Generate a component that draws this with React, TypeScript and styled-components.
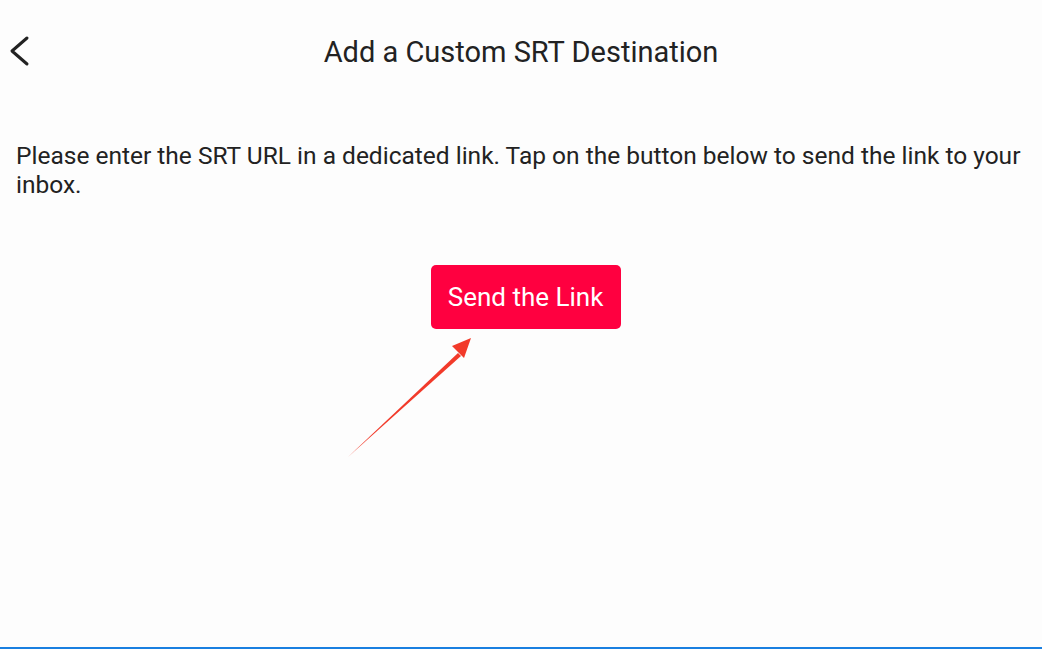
import React from "react";
import styled, { createGlobalStyle } from "styled-components";

const Global = createGlobalStyle`
  html, body { margin: 0; padding: 0; background: #fdfdfd; }
  body { font-family: Roboto, "Noto Sans", sans-serif; color: #222; }
`;

const Page = styled.div`
  position: relative;
  width: 1042px;
  height: 649px;
  box-sizing: border-box;
  background: #fdfdfd;
  border-bottom: 2px solid #1a7fe0;
  display: flex;
  flex-direction: column;
  overflow: hidden;
`;

const Header = styled.header`
  height: 104px;
  display: grid;
  grid-template-columns: 60px 1fr 60px;
  align-items: start;
  box-sizing: border-box;
`;

const BackButton = styled.button`
  border: 0;
  background: none;
  padding: 0 0 0 8px;
  height: 40px;
  display: flex;
  align-items: center;
  margin-top: 31px;
  cursor: pointer;
`;

const Title = styled.h1`
  margin: 34px 0 0 0;
  text-align: center;
  font-size: 29px;
  font-weight: 400;
  line-height: 36px;
  color: #222;
`;

const Body = styled.main`
  padding: 37px 16px 0 16px;
  display: flex;
  flex-direction: column;
  align-items: center;
`;

const Message = styled.p`
  margin: 0;
  align-self: stretch;
  font-size: 24.5px;
  line-height: 29px;
  color: #222;
`;

const SendButton = styled.button`
  margin-top: 66px;
  margin-left: 9px;
  width: 190px;
  height: 64px;
  border: 0;
  border-radius: 5px;
  background: #ff0040;
  color: #fff;
  font-family: Roboto, sans-serif;
  font-size: 26px;
  font-weight: 400;
  cursor: pointer;
`;

const Arrow = styled.svg`
  position: absolute;
  left: 340px;
  top: 330px;
`;

export default function App() {
  return (
    <>
      <Global />
      <Page>
        <Header>
          <BackButton aria-label="Back">
            <svg width="22" height="32" viewBox="0 0 22 32">
              <path d="M19 3 L4 16 L19 29" fill="none" stroke="#222" strokeWidth="3" strokeLinecap="round" strokeLinejoin="round" />
            </svg>
          </BackButton>
          <Title>Add a Custom SRT Destination</Title>
          <div />
        </Header>
        <Body>
          <Message>
            Please enter the SRT URL in a dedicated link. Tap on the button below to send the link to your inbox.
          </Message>
          <SendButton>Send the Link</SendButton>
        </Body>
        <Arrow width="140" height="135" viewBox="340 330 140 135">
          <path d="M348 457 L458 353 L461 356 Z" fill="#f23a2a" />
          <path d="M471 338 L452 346 L464 358 Z" fill="#f23a2a" />
        </Arrow>
      </Page>
    </>
  );
}
